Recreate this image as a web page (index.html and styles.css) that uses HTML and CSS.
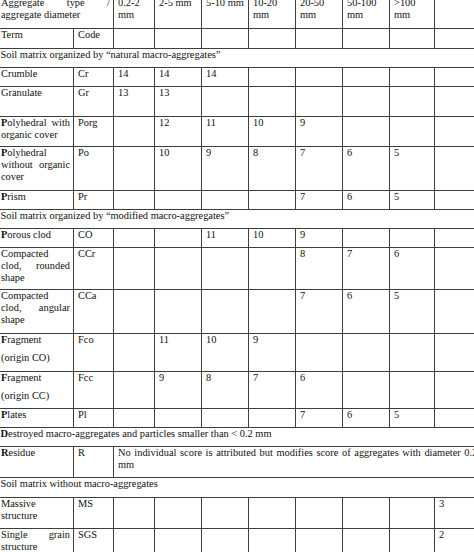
FILE: index.html
```html
<!DOCTYPE html>
<html lang="en">
<head>
<meta charset="utf-8">
<title>Aggregate types</title>
<link rel="stylesheet" href="styles.css">
</head>
<body>
<table class="agg">
  <colgroup>
    <col class="c-term"><col class="c-code"><col class="c-n1"><col class="c-n"><col class="c-n"><col class="c-n"><col class="c-n"><col class="c-n"><col class="c-n9"><col class="c-last">
  </colgroup>
  <tr class="r-head">
    <td colspan="2">Aggregate type / aggregate diameter</td>
    <td>0.2-2 mm</td><td>2-5 mm</td><td>5-10 mm</td><td>10-20 mm</td><td>20-50 mm</td><td>50-100 mm</td><td>&gt;100 mm</td><td></td>
  </tr>
  <tr class="r20">
    <td>Term</td><td>Code</td><td></td><td></td><td></td><td></td><td></td><td></td><td></td><td></td>
  </tr>
  <tr class="r19 cat"><td colspan="10">Soil matrix organized by “natural macro-aggregates”</td></tr>
  <tr class="r19">
    <td>Crumble</td><td>Cr</td><td>14</td><td>14</td><td>14</td><td></td><td></td><td></td><td></td><td></td>
  </tr>
  <tr class="r30">
    <td>Granulate</td><td>Gr</td><td>13</td><td>13</td><td></td><td></td><td></td><td></td><td></td><td></td>
  </tr>
  <tr class="r30">
    <td><b>P</b>olyhedral with organic cover</td><td>Porg</td><td></td><td>12</td><td>11</td><td>10</td><td>9</td><td></td><td></td><td></td>
  </tr>
  <tr class="r44">
    <td><b>P</b>olyhedral without organic cover</td><td>Po</td><td></td><td>10</td><td>9</td><td>8</td><td>7</td><td>6</td><td>5</td><td></td>
  </tr>
  <tr class="r19">
    <td><b>P</b>rism</td><td>Pr</td><td></td><td></td><td></td><td></td><td>7</td><td>6</td><td>5</td><td></td>
  </tr>
  <tr class="r19 cat"><td colspan="10">Soil matrix organized by “modified macro-aggregates”</td></tr>
  <tr class="r19">
    <td><b>P</b>orous clod</td><td>CO</td><td></td><td></td><td>11</td><td>10</td><td>9</td><td></td><td></td><td></td>
  </tr>
  <tr class="r42">
    <td>Compacted clod, rounded shape</td><td>CCr</td><td></td><td></td><td></td><td></td><td>8</td><td>7</td><td>6</td><td></td>
  </tr>
  <tr class="r44">
    <td>Compacted clod, angular shape</td><td>CCa</td><td></td><td></td><td></td><td></td><td>7</td><td>6</td><td>5</td><td></td>
  </tr>
  <tr class="r38">
    <td><div><b>F</b>ragment</div><div class="gap">(origin CO)</div></td><td>Fco</td><td></td><td>11</td><td>10</td><td>9</td><td></td><td></td><td></td><td></td>
  </tr>
  <tr class="r37">
    <td><div><b>F</b>ragment</div><div class="gap">(origin CC)</div></td><td>Fcc</td><td></td><td>9</td><td>8</td><td>7</td><td>6</td><td></td><td></td><td></td>
  </tr>
  <tr class="r19">
    <td><b>P</b>lates</td><td>Pl</td><td></td><td></td><td></td><td></td><td>7</td><td>6</td><td>5</td><td></td>
  </tr>
  <tr class="r19 cat"><td colspan="10"><b>D</b>estroyed macro-aggregates and particles smaller than &lt; 0.2 mm</td></tr>
  <tr class="r31">
    <td><b>R</b>esidue</td><td>R</td><td colspan="8">No individual score is attributed but modifies score of aggregates with diameter 0.2-2 mm</td>
  </tr>
  <tr class="r20 cat"><td colspan="10">Soil matrix without macro-aggregates</td></tr>
  <tr class="r31">
    <td>Massive structure</td><td>MS</td><td></td><td></td><td></td><td></td><td></td><td></td><td></td><td>3</td>
  </tr>
  <tr class="r31">
    <td>Single grain structure</td><td>SGS</td><td></td><td></td><td></td><td></td><td></td><td></td><td></td><td>2</td>
  </tr>
</table>
</body>
</html>
```
FILE: styles.css
```css
html, body {
  margin: 0;
  padding: 0;
  overflow: hidden;
  background: #ffffff;
}

.agg {
  margin: -4px 0 0 -4px;
  border-collapse: collapse;
  table-layout: fixed;
  width: 492px;
  font-family: "Liberation Serif", "Times New Roman", serif;
  font-size: 10.4px;
  line-height: 12px;
  color: #111111;
}

.c-term { width: 77px; }
.c-code { width: 40px; }
.c-n1 { width: 41px; }
.c-n { width: 47px; }
.c-n9 { width: 45px; }
.c-last { width: 55px; }

.agg td {
  border: 1px solid #3e3e3e;
  padding: 0 3px 0 4px;
  vertical-align: top;
  text-align: justify;
}

.agg .cat td {
  border-left: none;
  border-right: none;
}

.agg b { font-weight: bold; }

.gap { margin-top: 6px; }

.r-head td { height: 31px; }
.r19 td { height: 18px; }
.r20 td { height: 19px; }
.r30 td { height: 29px; }
.r31 td { height: 30px; }
.r37 td { height: 36px; }
.r38 td { height: 37px; }
.r42 td { height: 41px; }
.r44 td { height: 43px; }
```
